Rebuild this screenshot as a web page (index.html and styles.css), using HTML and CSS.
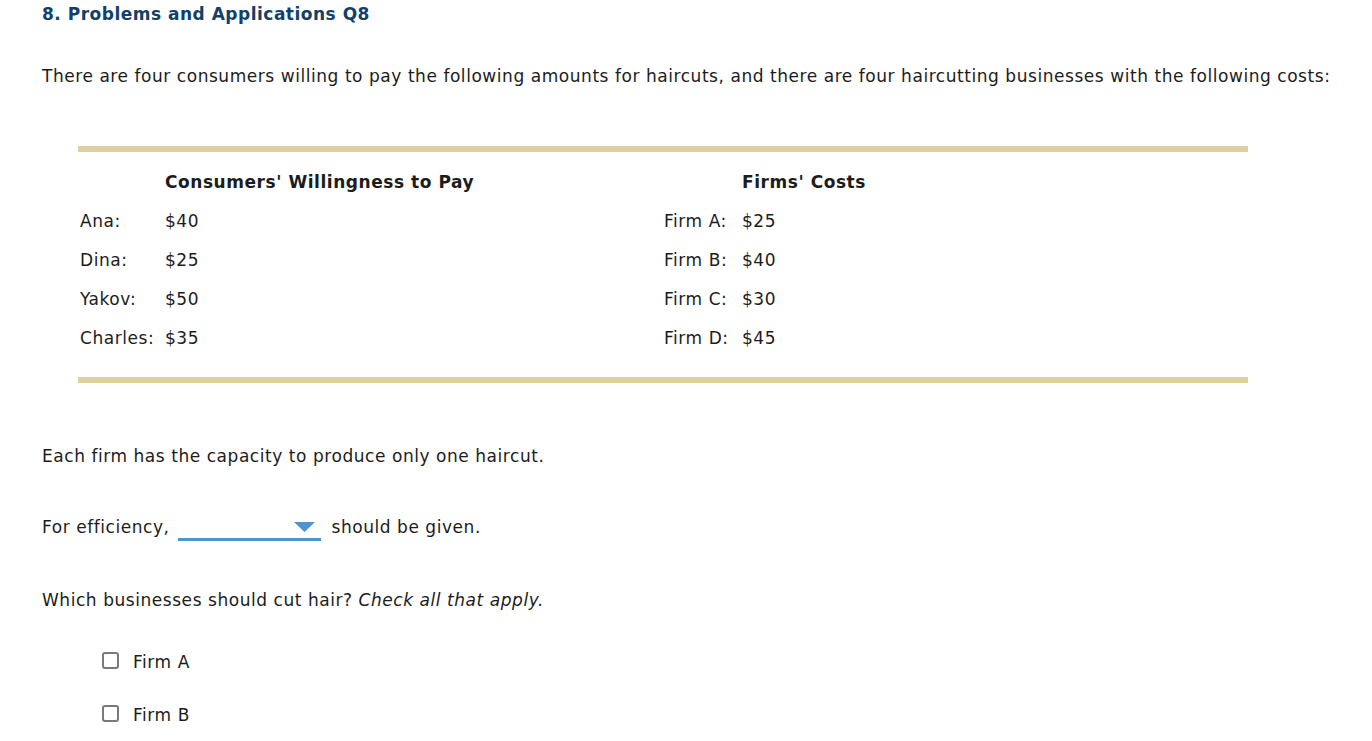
FILE: index.html
```html
<!DOCTYPE html>
<html>
<head>
<meta charset="utf-8">
<link rel="stylesheet" href="styles.css">
</head>
<body>
<div class="page">
  <h1 class="title">8. Problems and Applications Q8</h1>
  <p class="para intro">There are four consumers willing to pay the following amounts for haircuts, and there are four haircutting businesses with the following costs:</p>
  <div class="data-table">
    <div class="grid">
      <span></span><span class="head">Consumers' Willingness to Pay</span><span></span><span class="head">Firms' Costs</span>
      <span>Ana:</span><span>$40</span><span>Firm A:</span><span>$25</span>
      <span>Dina:</span><span>$25</span><span>Firm B:</span><span>$40</span>
      <span>Yakov:</span><span>$50</span><span>Firm C:</span><span>$30</span>
      <span>Charles:</span><span>$35</span><span>Firm D:</span><span>$45</span>
    </div>
  </div>
  <p class="para capacity">Each firm has the capacity to produce only one haircut.</p>
  <div class="para efficiency">
    <span>For efficiency,</span>
    <span class="dropdown"><svg width="21" height="10" viewBox="0 0 21 10"><polygon points="0,0 21,0 10.5,10" fill="#4f93cf"/></svg></span>
    <span>should be given.</span>
  </div>
  <p class="para which">Which businesses should cut hair? <em>Check all that apply.</em></p>
  <div class="options">
    <label class="option first"><span class="box"></span><span>Firm A</span></label>
    <label class="option"><span class="box"></span><span>Firm B</span></label>
  </div>
</div>
</body>
</html>
```
FILE: styles.css
```css
html, body {
  margin: 0;
  padding: 0;
  background: #ffffff;
}
body {
  font-family: "DejaVu Sans", Verdana, sans-serif;
  font-size: 17px;
  letter-spacing: 0.55px;
  color: #1c1c1c;
}
.page {
  padding-left: 42px;
}
.title {
  margin: 4px 0 0 0;
  font-size: 17px;
  line-height: 20px;
  font-weight: bold;
  letter-spacing: 0.5px;
  color: #123f6b;
}
.para {
  margin: 0;
  line-height: 20px;
}
.intro {
  margin-top: 42px;
}
.data-table {
  margin-top: 60px;
  margin-left: 36px;
  width: 1170px;
  border-top: 6px solid #ddd0a1;
  border-bottom: 6px solid #ddd0a1;
  padding: 10px 0 20px 2px;
  box-sizing: border-box;
}
.grid {
  display: grid;
  grid-template-columns: 85px 499px 78px 1fr;
  grid-auto-rows: 39px;
  align-items: center;
}
.head {
  font-weight: bold;
}
.capacity {
  margin-top: 63px;
}
.efficiency {
  margin-top: 51px;
  display: flex;
  align-items: flex-start;
  height: 20px;
}
.dropdown {
  margin-left: 9px;
  margin-right: 10px;
  width: 137px;
  height: 16px;
  border-bottom: 3px solid #4f93cf;
  display: flex;
  justify-content: flex-end;
  align-items: flex-start;
  padding: 5px 6px 0 0;
  flex-shrink: 0;
}
.dropdown svg {
  display: block;
}
.which {
  margin-top: 53px;
}
.which em {
  font-style: italic;
}
.options {
  margin-top: 42px;
  padding-left: 60px;
}
.option {
  display: flex;
  align-items: center;
  height: 20px;
  line-height: 20px;
  margin-top: 33px;
}
.option.first {
  margin-top: 0;
}
.box {
  width: 13px;
  height: 13px;
  border: 2px solid #7a7a7a;
  border-radius: 3px;
  margin-right: 14px;
  margin-top: -4px;
  flex-shrink: 0;
}
```
